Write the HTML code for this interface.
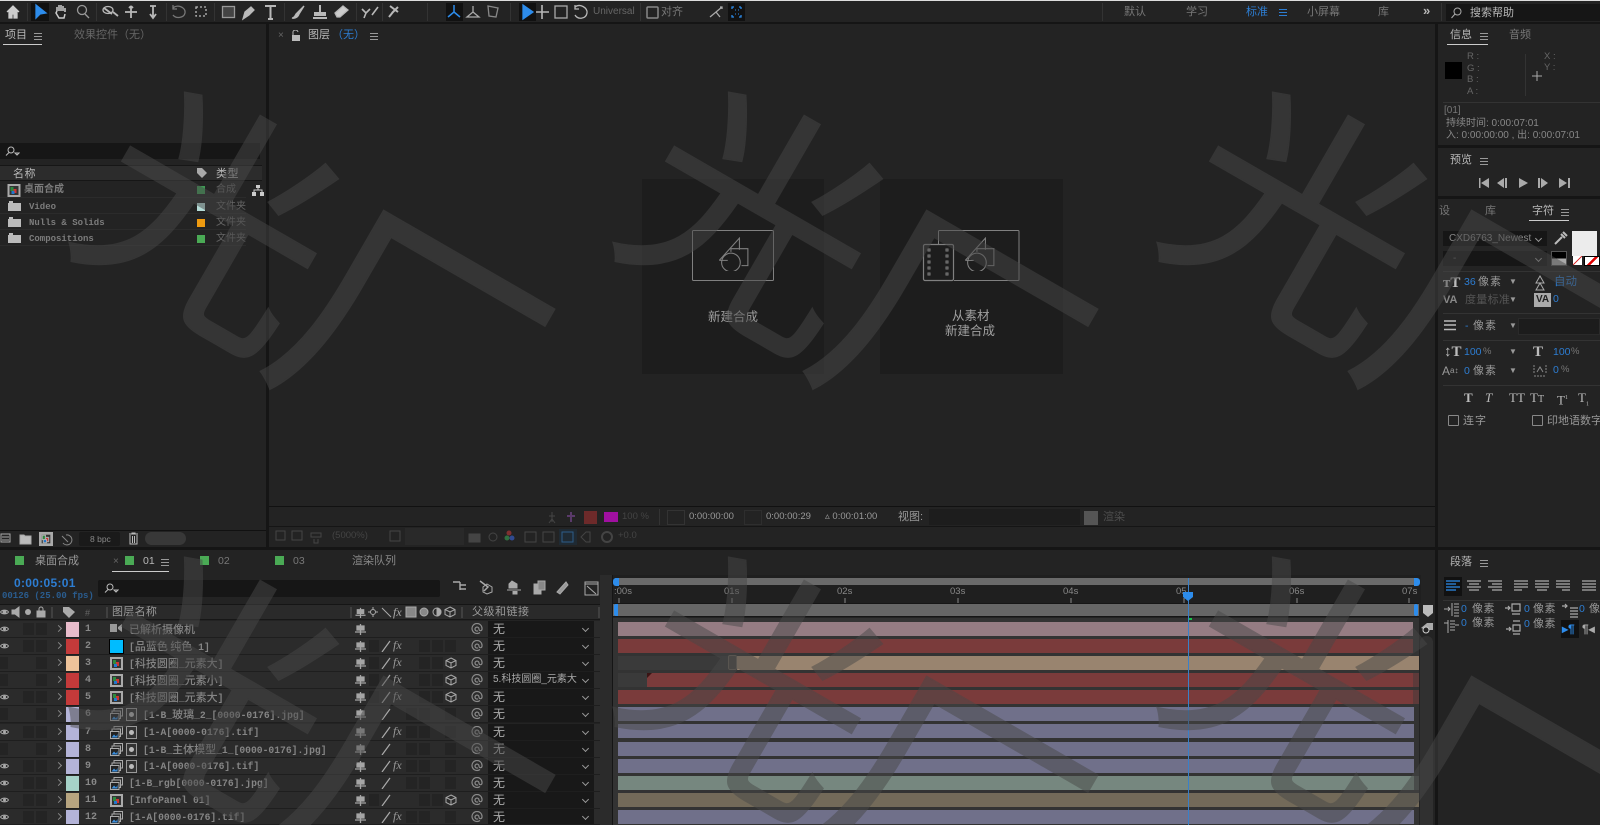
<!DOCTYPE html>
<html><head><meta charset="utf-8"><style>
*{box-sizing:border-box}
html,body{margin:0;padding:0;width:1600px;height:825px;overflow:hidden;background:#232323}
body{position:relative;font-family:"Liberation Sans","Noto Sans CJK SC",sans-serif;font-size:11px;color:#999;filter:blur(.35px)}
.a,body>span,body>i,body>svg,body>div{position:absolute;white-space:nowrap}
i{display:block;font-style:normal}
.t{line-height:14px;height:14px;transform:translateY(-7px)}
.d{color:#666}.b{color:#2d7dd2}.w{color:#b8b8b8}
.l{background:#161616}
.m{width:8px;height:7px;border-top:1px solid #999;border-bottom:1px solid #999;background:linear-gradient(#999,#999) 0 2px/100% 1px no-repeat;transform:translateY(-3px)}
.r{left:0;top:0;width:600px;height:17px;border-bottom:1px solid #1e1e1e;background:#2b2b2b;overflow:hidden}
.r>*{position:absolute}
.sb,.lb,.x0,.x1,.x2,.x3,.x4,.x5{top:2px;width:11px;height:12px;background:#242424}
.sb{left:23px}.lb{left:36px}.x0{left:369px;width:10px}.x1{left:406px}.x2{left:419px}.x3{left:432px}.x4{left:445px}.x5{left:0;width:8px}
.ch{left:56px;top:5px;width:5px;height:5px;border-top:1px solid #888;border-right:1px solid #888;transform:rotate(45deg)}
.sw{left:66px;top:1px;width:13px;height:15px}
.n{left:85px;top:1px;line-height:15px;font-size:10px;color:#888;font-family:"Liberation Mono",monospace;font-weight:bold}
.nm{top:1px;line-height:15px;font-size:9.7px;color:#858585;font-family:"Liberation Mono","Noto Sans CJK SC",monospace;font-weight:bold;left:129px}
.nm.k{left:143px}
.nm em{font-style:normal;font-size:11px;font-family:"Noto Sans CJK SC",sans-serif;font-weight:500}
.dd{left:488px;top:0;width:106px;height:16px;background:#181818;color:#aaa;font-size:12px;line-height:16px;padding-left:5px}
.dd:after,.cv:after{content:"";position:absolute;right:6px;top:5px;width:4px;height:4px;border-right:1px solid #999;border-bottom:1px solid #999;transform:rotate(45deg)}
.sy{left:355px;top:2px}.sl{left:381px;top:2px}.fx{left:393px;top:0;font:italic 12px/15px "Liberation Serif",serif;color:#999}
.cb{left:445px;top:2px}.sp{left:471px;top:2px}.ey{left:0;top:4px}
.bar{height:14px}
.mono{font-family:"Liberation Mono","Noto Sans CJK SC",monospace;font-size:9px;color:#7c7c7c;font-weight:bold}
</style></head><body>
<svg width="0" height="0" style="position:absolute"><defs>
<symbol id="eye" viewBox="0 0 9 8"><path d="M.5 4C2 1.5 7 1.5 8.500 4 7 6.500 2 6.500.5 4Z" fill="none" stroke="#aaa"/><circle cx="4.500" cy="4" r="1.500" fill="#aaa"/></symbol>
<symbol id="shy" viewBox="0 0 11 12"><path d="M2 3H9V7H2ZM0 9H11M5.500 1V12" fill="#a5a5a5" stroke="#a5a5a5" stroke-width="1.300"/></symbol>
<symbol id="sla" viewBox="0 0 10 12"><path d="M1 12 9 1" stroke="#aaa" stroke-width="1.200"/></symbol>
<symbol id="cub" viewBox="0 0 12 12"><path d="M6 1 11 3.500V8.500L6 11 1 8.500V3.500ZM1 3.500 6 6 11 3.500M6 6V11" fill="none" stroke="#aaa"/></symbol>
<symbol id="spi" viewBox="0 0 12 12"><path d="M9 9.500A5 5 0 1 1 11 6C11 8 8 8.500 8 6A2 2 0 1 0 7 7.800" fill="none" stroke="#8a8a8a" stroke-width="1.200"/></symbol>
<symbol id="cmp" viewBox="0 0 13 13"><rect width="13" height="13" fill="#aaa"/><rect x="2" y="2" width="9" height="9" fill="#333"/><rect x="3" y="3" width="3" height="4" fill="#2d8a3e"/><rect x="6" y="5" width="3" height="4" fill="#c33"/><rect x="4" y="7" width="3" height="3" fill="#27c"/></symbol>
<symbol id="ftg" viewBox="0 0 13 13"><path d="M4 3V.5H12.500V8H10M2 5.500V3H10.500V10.500H9" fill="none" stroke="#aaa"/><rect x=".5" y="5.500" width="8.500" height="7" fill="#222" stroke="#aaa"/><path d="M1.500 11.500 4 8.500 6 10.500 7.500 8V11.500Z" fill="#3a90e0"/></symbol>
<symbol id="bx" viewBox="0 0 11 13"><rect x=".5" y=".5" width="10" height="12" fill="#333" stroke="#999"/><circle cx="5.500" cy="6.500" r="2.500" fill="#bbb"/></symbol>
<symbol id="fol" viewBox="0 0 13 10"><path d="M0 2H1V0H5V2H13V10H0Z" fill="#bbb"/></symbol>
<symbol id="shp" viewBox="0 0 34 32"><path d="M5 22 24 1V12M5 22H13" fill="none" stroke="#808080" stroke-width="1"/><path d="M16 14V11H32V27H26" fill="none" stroke="#808080"/><circle cx="16" cy="24" r="8.800" fill="none" stroke="#808080" stroke-width="1"/></symbol>
</defs></svg>

<!-- frame -->
<div style="left:0;top:0;width:1600px;height:1px;background:#ddd"></div>
<div style="left:0;top:22px;width:1600px;height:2px;background:#151515"></div>
<div style="left:266px;top:24px;width:3px;height:524px;background:#151515"></div>
<div style="left:1435px;top:24px;width:3px;height:801px;background:#151515"></div>
<div style="left:0;top:547px;width:1600px;height:3px;background:#151515"></div>
<div style="left:1438px;top:145px;width:162px;height:3px;background:#151515"></div>
<div style="left:1438px;top:196px;width:162px;height:3px;background:#151515"></div>

<!-- toolbar -->
<div style="left:31px;top:3px;width:18px;height:18px;background:#111"></div>
<div style="left:446px;top:3px;width:17px;height:18px;background:#111"></div>
<div style="left:519px;top:3px;width:17px;height:18px;background:#111"></div>
<div style="left:728px;top:3px;width:17px;height:18px;background:#111"></div>
<svg style="left:0;top:0" width="760" height="23" fill="none" stroke="#b8b8b8" stroke-width="1.300">
<path d="M7 12 13 6 19 12M9 12V18H12V14H14V18H17V12" fill="#ccc" stroke="#ccc"/>
<path d="M36 5V18L40 14 46 13Z" fill="#2d8ceb" stroke="#2d8ceb"/>
<path d="M57 11V7M59 11V5M61 11V5M63 11V6M65 12V8M57 11 56 13 59 18H64L65 14" stroke="#ccc" stroke-width="1.500"/>
<circle cx="82" cy="10" r="4.500" stroke="#999"/><path d="M85 14 89 18" stroke="#999"/>
<ellipse cx="108" cy="10" rx="5" ry="3.500"/><path d="M113 12 118 16M104 8 112 14" stroke-width="1.800"/>
<path d="M125 12H137M131 6V18M131 6 129 8M131 6 133 8" stroke-width="1.800"/>
<path d="M153 6V17M150 14 153 18 156 14M150 6H156" stroke-width="1.800"/>
<path d="M173 8C177 4 186 7 185 13 184 18 176 19 173 15M173 5V9H177" stroke="#777"/>
<rect x="196" y="7" width="10" height="9" stroke-dasharray="2 2"/>
<rect x="222.500" y="6.500" width="12" height="11" stroke="#999" fill="#444"/>
<path d="M243 19 245 12 251 7 254 10 249 15Z" fill="#bbb"/>
<path d="M265 6H276M270.500 6V19M268 19H273" stroke-width="2"/>
<path d="M292 18C294 18 295 16 296 14L304 6 299 14C298 17 295 19 292 18Z" fill="#bbb"/>
<path d="M320 5V12M315 13H325V15H315ZM313 18H327" stroke-width="2"/>
<path d="M335 13 343 6 348 10 340 17H337Z" fill="#ccc"/>
<path d="M362 9 366 13 364 18M366 13 370 9M372 15 378 7" stroke-width="1.600"/>
<path d="M390 6 398 12M392 13 398 7M393 12 389 17" stroke-width="2"/>
<path d="M454 5V12L448 17M454 12 460 17" stroke="#2d8ceb" stroke-width="1.500"/>
<path d="M473 6V12L467 17H479L473 12" stroke="#aaa"/>
<path d="M488 6 498 8 496 17 489 16Z" stroke="#888"/>
<path d="M523 5V19L533 12Z" fill="#2d8ceb" stroke="#2d8ceb"/>
<path d="M536 12H549M542 5V19" stroke-width="1.600"/>
<rect x="555" y="6" width="12" height="12" stroke="#aaa"/>
<path d="M575 7C580 3 588 8 587 13 586 19 578 20 575 15M575 5V9H579"/>
<rect x="647" y="7" width="11" height="11" rx="1" stroke="#888" stroke-width="1.500"/>
<path d="M710 17 716 12 720 17M716 12 722 7M720 7H722V9" stroke="#aaa"/>
<path d="M732 9V7H734M741 7V9M739 7H741M732 15V17H734M741 15V17H739M735 10H735.800M738 10H738.800M735 14H735.800M738 14H738.800" stroke="#2d8ceb"/>
<path d="M27.500 3V21M96.500 3V21M166.500 3V21M214.500 3V21M284.500 3V21M356.500 3V21M382.500 3V21M427.500 3V21M510.500 3V21M640.500 3V21" stroke="#333" stroke-width="1"/>
</svg>
<div style="left:1102px;top:3px;width:1px;height:18px;background:#333"></div>
<div style="left:1441px;top:3px;width:1px;height:18px;background:#333"></div>
<span class="t d" style="left:593px;top:12px;font-size:10px">Universal</span>
<span class="t d" style="left:661px;top:12px;font-size:11px;color:#777">对齐</span>
<span class="t" style="left:1124px;top:12px;color:#777">默认</span>
<span class="t" style="left:1186px;top:12px;color:#777">学习</span>
<span class="t b" style="left:1246px;top:12px">标准</span>
<i class="m" style="left:1279px;top:12px;border-color:#2d7dd2;background-image:linear-gradient(#2d7dd2,#2d7dd2)"></i>
<span class="t" style="left:1307px;top:12px;color:#777">小屏幕</span>
<span class="t" style="left:1378px;top:12px;color:#777">库</span>
<span class="t w" style="left:1423px;top:11px;font-weight:bold;font-size:13px">»</span>
<div class="l" style="left:1446px;top:4px;width:154px;height:17px"></div>
<svg style="left:1450px;top:6px" width="13" height="13" fill="none" stroke="#aaa"><circle cx="7.500" cy="5.500" r="3.500"/><path d="M5 8 1.500 12"/></svg>
<span class="t w" style="left:1470px;top:13px">搜索帮助</span>

<!-- project panel -->
<span class="t w" style="left:5px;top:35px">项目</span><i class="m" style="left:34px;top:36px"></i>
<div style="left:3px;top:44px;width:39px;height:1px;background:#ccc"></div>
<span class="t d" style="left:74px;top:35px">效果控件（无）</span>
<div class="l" style="left:0;top:143px;width:260px;height:16px"></div>
<svg style="left:4px;top:145px" width="16" height="12" fill="none" stroke="#bbb"><circle cx="7" cy="5" r="3"/><path d="M5 7.500 2 10.500M11 8H15L13 10Z"/></svg>
<div style="left:0;top:165px;width:262px;height:16px;background:#2c2c2c;border-top:1px solid #161616;border-bottom:1px solid #161616"></div>
<span class="t w" style="left:13px;top:174px;letter-spacing:.5px">名称</span>
<span class="t w" style="left:216px;top:174px;letter-spacing:.5px">类型</span>
<svg style="left:196px;top:167px" width="12" height="12"><path d="M1 1H6L11 6 6 11 1 6Z" fill="#aaa"/></svg>
<svg style="left:7px;top:184px" width="14" height="13"><use href="#cmp"/></svg>
<span class="t mono" style="left:24px;top:190px"><span style="font-size:10px">桌面合成</span></span>
<i style="left:197px;top:186px;width:8px;height:8px;background:#3f9a55"></i>
<span class="t d" style="left:216px;top:190px;font-size:10px">合成</span>
<svg style="left:252px;top:185px" width="12" height="11" fill="#ccc"><rect x="4" y="0" width="4" height="3"/><rect x="0" y="7" width="4" height="4"/><rect x="8" y="7" width="4" height="4"/><path d="M2 7V5H10V7M6 3V5" stroke="#ccc" fill="none"/></svg>
<svg style="left:8px;top:201px" width="13" height="10"><use href="#fol"/></svg>
<span class="t mono" style="left:29px;top:207px">Video</span>
<i style="left:197px;top:203px;width:8px;height:8px;background:#b5dcd8"></i>
<span class="t d" style="left:216px;top:207px;font-size:10px">文件夹</span>
<svg style="left:8px;top:217px" width="13" height="10"><use href="#fol"/></svg>
<span class="t mono" style="left:29px;top:223px">Nulls &amp; Solids</span>
<i style="left:197px;top:219px;width:8px;height:8px;background:#ee9a10"></i>
<span class="t d" style="left:216px;top:223px;font-size:10px">文件夹</span>
<svg style="left:8px;top:233px" width="13" height="10"><use href="#fol"/></svg>
<span class="t mono" style="left:29px;top:239px">Compositions</span>
<i style="left:197px;top:235px;width:8px;height:8px;background:#4aaa55"></i>
<span class="t d" style="left:216px;top:239px;font-size:10px">文件夹</span>
<div style="left:0;top:197px;width:246px;height:1px;background:#2b2b2b"></div>
<div style="left:0;top:213px;width:246px;height:1px;background:#2b2b2b"></div>
<div style="left:0;top:229px;width:246px;height:1px;background:#2b2b2b"></div>
<div style="left:0;top:245px;width:246px;height:1px;background:#2b2b2b"></div>
<div style="left:0;top:530px;width:266px;height:1px;background:#111"></div>
<svg style="left:0;top:532px" width="120" height="14" fill="none" stroke="#aaa"><rect x="1" y="2" width="9" height="8"/><path d="M2 5H9M2 8H9"/><path d="M20 3H24L25 4H31V12H20Z" fill="#bbb"/><use href="#cmp" x="39" y="0" width="14" height="14"/><path d="M62 4 68 10M66 3A5 5 0 1 1 63 11" stroke="#888"/></svg>
<div style="left:79px;top:532px;width:41px;height:14px;background:#1a1a1a;border-radius:2px"></div>
<span class="t" style="left:90px;top:539px;font-size:8.500px;color:#888">8 bpc</span>
<svg style="left:128px;top:532px" width="11" height="13" fill="none" stroke="#bbb"><path d="M1 2H10M4 2V1H7V2M2 3V12H9V3M4.500 4V11M6.500 4V11"/></svg>
<div style="left:145px;top:532px;width:41px;height:13px;background:#383838;border-radius:7px"></div>

<!-- viewer -->
<span class="t d" style="left:278px;top:36px;font-size:10px">×</span>
<svg style="left:291px;top:30px" width="10" height="11"><path d="M2 5V3A2.500 2.500 0 0 1 7 2" fill="none" stroke="#bbb"/><rect x="1" y="5" width="8" height="6" fill="#bbb"/></svg>
<span class="t w" style="left:308px;top:35px">图层</span>
<span class="t b" style="left:332px;top:35px">（无）</span>
<i class="m" style="left:370px;top:36px"></i>
<div style="left:642px;top:179px;width:182px;height:195px;background:#1d1d1d"></div>
<div style="left:880px;top:179px;width:183px;height:195px;background:#1d1d1d"></div>
<svg style="left:680px;top:225px" width="400" height="60" fill="none" stroke="#808080">
<rect x="12.500" y="5.500" width="81" height="50" rx="1"/>
<use href="#shp" x="34" y="12" width="36" height="34"/>
<path d="M258.500 19V6.500A1 1 0 0 1 259.500 5.500H338A1 1 0 0 1 339 6.500V54.500A1 1 0 0 1 338 55.500H274"/>
<use href="#shp" x="280" y="12" width="36" height="34"/>
<rect x="243.500" y="19.500" width="30" height="36" rx="1.500" stroke-width="1.200"/>
<path d="M248 24h2v2h-2zM248 30h2v2h-2zM248 36h2v2h-2zM248 42h2v2h-2zM248 48h2v2h-2zM266 24h2v2h-2zM266 30h2v2h-2zM266 36h2v2h-2zM266 42h2v2h-2zM266 48h2v2h-2z"/>
</svg>
<span class="t" style="left:708px;top:317px;font-size:12.500px;color:#a0a0a0">新建合成</span>
<span class="t" style="left:952px;top:316px;font-size:12.500px;color:#a0a0a0">从素材</span>
<span class="t" style="left:945px;top:331px;font-size:12.500px;color:#a0a0a0">新建合成</span>

<div style="left:269px;top:506px;width:1166px;height:1px;background:#111"></div>
<div style="left:269px;top:526px;width:1166px;height:1px;background:#151515"></div>
<svg style="left:540px;top:509px" width="90" height="16"><path d="M12 3V13M9 7H15M9 14 12 10 15 14" stroke="#444" fill="none"/><path d="M31 3V13M27 7H35" stroke="#5a3a6a" stroke-width="2"/><rect x="44" y="2" width="13" height="13" fill="#6d2a2a"/></svg>
<i style="left:604px;top:512px;width:14px;height:10px;background:#a010a0"></i>
<span class="t" style="left:622px;top:517px;font-size:9.500px;color:#444">100 %</span>
<div style="left:659px;top:509px;width:1px;height:16px;background:#333"></div>
<div style="left:667px;top:510px;width:18px;height:15px;border:1px solid #333"></div>
<div style="left:744px;top:510px;width:18px;height:15px;border:1px solid #2e2e2e"></div>
<span class="t" style="left:689px;top:517px;font-size:9.500px;color:#999">0:00:00:00</span>
<span class="t" style="left:766px;top:517px;font-size:9.500px;color:#999">0:00:00:29</span>
<span class="t" style="left:825px;top:517px;font-size:9.500px;color:#999">▵ 0:00:01:00</span>
<span class="t" style="left:898px;top:517px;font-size:11px;color:#999">视图:</span>
<div style="left:929px;top:509px;width:151px;height:16px;background:#1d1d1d"></div>
<i style="left:1084px;top:511px;width:14px;height:14px;background:#555"></i>
<span class="t d" style="left:1103px;top:517px;font-size:11px;color:#4d4d4d">渲染</span>
<svg style="left:270px;top:528px" width="350" height="18" fill="none" stroke="#444"><rect x="6" y="3" width="9" height="9"/><rect x="22" y="3" width="10" height="9"/><path d="M41 5H51V9H41ZM44 11V15H48V11"/><rect x="120" y="3" width="10" height="10"/><rect x="199" y="6" width="11" height="8" fill="#444"/><circle cx="223" cy="9" r="4"/><circle cx="239" cy="5" r="2.500" fill="#803030" stroke="none"/><circle cx="237" cy="10" r="2.500" fill="#307040" stroke="none"/><circle cx="242" cy="10" r="2.500" fill="#304a90" stroke="none"/><rect x="255" y="4" width="11" height="10"/><rect x="273" y="4" width="11" height="10"/><rect x="289" y="1" width="18" height="16" fill="#1f2a33" stroke="none"/><rect x="292" y="4" width="11" height="10" stroke="#2c5c88"/><path d="M311 9 316 4H320V14H316Z"/><circle cx="337" cy="9" r="5" stroke-width="2"/></svg>
<span class="t" style="left:332px;top:536px;font-size:9.500px;color:#444">(5000%)</span>
<div style="left:405px;top:528px;width:59px;height:17px;background:#292929"></div>
<span class="t" style="left:618px;top:536px;font-size:9.500px;color:#444">+0.0</span>

<!-- info -->
<span class="t w" style="left:1450px;top:35px">信息</span><i class="m" style="left:1480px;top:36px"></i>
<div style="left:1447px;top:44px;width:41px;height:1px;background:#ccc"></div>
<span class="t" style="left:1509px;top:35px;color:#777">音频</span>
<i style="left:1445px;top:62px;width:17px;height:17px;background:#000"></i>
<span class="t" style="left:1467px;top:57px;font-size:9.500px;color:#666">R :</span>
<span class="t" style="left:1467px;top:69px;font-size:9.500px;color:#666">G :</span>
<span class="t" style="left:1467px;top:80px;font-size:9.500px;color:#666">B :</span>
<span class="t" style="left:1467px;top:92px;font-size:9.500px;color:#666">A :</span>
<div style="left:1525px;top:54px;width:1px;height:42px;background:#333"></div>
<span class="t" style="left:1544px;top:57px;font-size:9.500px;color:#666">X :</span>
<span class="t" style="left:1544px;top:68px;font-size:9.500px;color:#666">Y :</span>
<svg style="left:1532px;top:71px" width="10" height="10"><path d="M5 0V10M0 5H10" stroke="#aaa"/></svg>
<div style="left:1443px;top:102px;width:157px;height:1px;background:#333"></div>
<span class="t" style="left:1444px;top:111px;font-size:10px;color:#777">[01]</span>
<span class="t" style="left:1446px;top:124px;font-size:10px;color:#888">持续时间: 0:00:07:01</span>
<span class="t" style="left:1446px;top:136px;font-size:10px;color:#888">入: 0:00:00:00 , 出: 0:00:07:01</span>

<!-- preview -->
<span class="t w" style="left:1450px;top:160px">预览</span><i class="m" style="left:1480px;top:161px"></i>
<svg style="left:1478px;top:177px" width="95" height="12" fill="#aaa"><path d="M1 1H2.500V11H1ZM3 6 11 1V11ZM19 6 26 1V11ZM27 1H29V11H27ZM41 1 50 6 41 11ZM60 1H62V11H60ZM63 1 70 6 63 11ZM81 1 89 6 81 11ZM90 1H92V11H90Z"/></svg>

<!-- character -->
<span class="t" style="left:1439px;top:211px;color:#777">设</span>
<span class="t" style="left:1485px;top:211px;color:#777">库</span>
<span class="t w" style="left:1532px;top:211px">字符</span><i class="m" style="left:1561px;top:212px"></i>
<div style="left:1529px;top:220px;width:40px;height:1px;background:#ccc"></div>
<div class="l cv" style="left:1443px;top:231px;width:104px;height:15px;color:#888;font-size:10px;line-height:15px;padding-left:6px">CXD6763_Newest</div>
<div class="l cv" style="left:1443px;top:251px;width:104px;height:15px;color:#666;font-size:10px;line-height:15px;padding-left:10px">-</div>
<svg style="left:1552px;top:231px" width="16" height="16"><path d="M3 13 10 6M9 3 13 7M11 1 15 5" stroke="#bbb" stroke-width="2" fill="none"/></svg>
<div style="left:1551px;top:251px;width:16px;height:15px;background:linear-gradient(#000 50%,#aaa 50%);border:1px solid #555"></div>
<i style="left:1572px;top:231px;width:25px;height:25px;background:#ececec"></i>
<i style="left:1573px;top:256px;width:9px;height:9px;background:linear-gradient(135deg,#fff 45%,#d33 45%,#d33 55%,#fff 55%)"></i>
<i style="left:1584px;top:256px;width:16px;height:10px;background:linear-gradient(135deg,#fff 45%,#d00 45%,#d00 60%,#fff 60%);border:1px solid #000"></i>
<div style="left:1443px;top:271px;width:157px;height:1px;background:#333"></div>
<div style="left:1443px;top:313px;width:157px;height:1px;background:#333"></div>
<div style="left:1443px;top:340px;width:157px;height:1px;background:#333"></div>
<div style="left:1443px;top:385px;width:157px;height:1px;background:#333"></div>
<span class="a t" style="left:1443px;top:283px;font:bold 15px/14px 'Liberation Serif',serif;color:#bbb">ᴛT</span>
<span class="t b" style="left:1464px;top:282px;font-size:10.500px">36</span><span class="t" style="left:1478px;top:282px;letter-spacing:1px">像素</span><span class="t" style="left:1509px;top:282px;font-size:8px">▼</span>
<svg style="left:1532px;top:275px" width="16" height="16" fill="none" stroke="#aaa"><path d="M8 1 4 8H12ZM8 8 4 15H12Z"/></svg>
<span class="t b" style="left:1554px;top:282px;font-size:11.500px">自动</span>
<span class="t" style="left:1443px;top:300px;font-size:11px;color:#888;font-weight:bold">VA</span>
<span class="t" style="left:1465px;top:300px;color:#555;letter-spacing:.3px">度量标准</span><span class="t" style="left:1509px;top:300px;font-size:8px">▼</span>
<span class="t" style="left:1534px;top:300px;background:#aaa;color:#222;font-size:10px;font-weight:bold;padding:0 2px">VA</span>
<span class="t b" style="left:1553px;top:299px;font-size:10.500px">0</span>
<svg style="left:1444px;top:319px" width="13" height="13"><path d="M0 2H12M0 6H12M0 10.500H12" stroke="#bbb" stroke-width="1.500"/></svg>
<span class="t b" style="left:1465px;top:326px;font-size:10.500px">-</span><span class="t" style="left:1473px;top:326px;letter-spacing:1px">像素</span><span class="t" style="left:1509px;top:326px;font-size:8px">▼</span>
<div style="left:1518px;top:318px;width:82px;height:17px;background:#1c1c1c;border:1px solid #2a2a2a"></div>
<span class="t" style="left:1444px;top:352px;font:bold 15px/14px 'Liberation Serif',serif;color:#bbb">↕T</span>
<span class="t b" style="left:1464px;top:352px;font-size:10.500px">100</span><span class="t" style="left:1483px;top:352px;font-size:9.500px;color:#777">%</span><span class="t" style="left:1509px;top:352px;font-size:8px">▼</span>
<span class="t" style="left:1533px;top:352px;font:bold 15px/14px 'Liberation Serif',serif;color:#bbb">T</span>
<span class="t b" style="left:1553px;top:352px;font-size:10.500px">100</span><span class="t" style="left:1571px;top:352px;font-size:9.500px;color:#777">%</span>
<span class="t" style="left:1442px;top:371px;font-size:12px;color:#999">A</span><span class="t" style="left:1450px;top:371px;font-size:8px;color:#999">a↕</span>
<span class="t b" style="left:1464px;top:371px;font-size:10.500px">0</span><span class="t" style="left:1473px;top:371px;letter-spacing:1px">像素</span><span class="t" style="left:1509px;top:371px;font-size:8px">▼</span>
<svg style="left:1533px;top:364px" width="14" height="14" fill="none" stroke="#888"><path d="M1 1V9M13 1V9M1 12H13" stroke-dasharray="2 1"/><path d="M4 8 7 3 10 8"/></svg>
<span class="t b" style="left:1553px;top:370px;font-size:10.500px">0</span><span class="t" style="left:1561px;top:370px;font-size:9.500px;color:#777">%</span>
<span class="t" style="left:1464px;top:398px;font:bold 13px/14px 'Liberation Serif',serif;color:#bbb">T</span>
<span class="t" style="left:1485px;top:398px;font:italic 13px/14px 'Liberation Serif',serif;color:#bbb">T</span>
<span class="t" style="left:1509px;top:398px;font:13px/14px 'Liberation Serif',serif;color:#bbb">TT</span>
<span class="t" style="left:1530px;top:398px;font:13px/14px 'Liberation Serif',serif;color:#bbb">T<span style="font-size:10px">T</span></span>
<span class="t" style="left:1557px;top:398px;font:13px/14px 'Liberation Serif',serif;color:#bbb">T<sup style="font-size:6px">1</sup></span>
<span class="t" style="left:1578px;top:398px;font:13px/14px 'Liberation Serif',serif;color:#bbb">T<sub style="font-size:6px">1</sub></span>
<i style="left:1448px;top:415px;width:11px;height:11px;border:1.500px solid #888;border-radius:1px"></i>
<span class="t" style="left:1463px;top:421px;letter-spacing:1px">连字</span>
<i style="left:1532px;top:415px;width:11px;height:11px;border:1.500px solid #888;border-radius:1px"></i>
<span class="t" style="left:1547px;top:421px">印地语数字</span>

<!-- paragraph -->
<span class="t w" style="left:1450px;top:562px">段落</span><i class="m" style="left:1480px;top:563px"></i>
<div style="left:1444px;top:577px;width:18px;height:19px;background:#111"></div>
<svg style="left:1444px;top:578px" width="156" height="16" stroke="#aaa" stroke-width="1.300" fill="none">
<path d="M2 3H16M2 6H12M2 9H16M2 12H12" stroke="#2d8ceb"/>
<path d="M23 3H37M25 6H35M23 9H37M25 12H35M44 3H58M48 6H58M44 9H58M48 12H58M70 3H84M70 6H84M70 9H84M70 12H78M91 3H105M91 6H105M91 9H105M93 12H103M112 3H126M112 6H126M112 9H126M118 12H126M138 3H152M138 6H152M138 9H152M138 12H152"/>
</svg>
<div style="left:1443px;top:600px;width:157px;height:1px;background:#333"></div>
<svg style="left:1444px;top:602px" width="156" height="34" stroke="#aaa" fill="none">
<path d="M0 7H6M4 5 6 7 4 9M8 1V14M10 2H15M10 5H15M10 8H15M10 11H15M10 14H15"/>
<path d="M0 22H4M4 19V32M6 20H11M6 23H11M6 26H11M6 29H11M11 24H15" transform="translate(0,-1)"/>
<path d="M61 6H66M64 4 66 6 64 8M68 2H76V9H68ZM68 12H76" stroke-width="1.200"/>
<path d="M62 27H67M65 25 67 27 65 29M69 19H76M69 23H76V29H69ZM69 32H76" stroke-width="1.200"/>
<path d="M118 4H123M121 2 123 4 121 6M126 6H134M126 9H134M126 12H134M126 15H134" stroke-width="1.200"/>
</svg>
<span class="t b" style="left:1461px;top:609px;font-size:10.500px">0</span><span class="t" style="left:1472px;top:609px;letter-spacing:.5px">像素</span>
<span class="t b" style="left:1524px;top:609px;font-size:10.500px">0</span><span class="t" style="left:1533px;top:609px;letter-spacing:.5px">像素</span>
<span class="t b" style="left:1579px;top:609px;font-size:10.500px">0</span><span class="t" style="left:1589px;top:609px">像</span>
<span class="t b" style="left:1461px;top:623px;font-size:10.500px">0</span><span class="t" style="left:1472px;top:623px;letter-spacing:.5px">像素</span>
<span class="t b" style="left:1524px;top:624px;font-size:10.500px">0</span><span class="t" style="left:1533px;top:624px;letter-spacing:.5px">像素</span>
<div style="left:1561px;top:620px;width:18px;height:18px;background:#111"></div>
<span class="t" style="left:1562px;top:629px;font-size:12px;font-weight:bold;color:#2d8ceb">▸¶</span>
<span class="t" style="left:1582px;top:629px;font-size:12px;font-weight:bold;color:#aaa">¶◂</span>

<!-- timeline header -->
<i style="left:15px;top:556px;width:9px;height:9px;background:#4aaa55"></i><span class="t" style="left:35px;top:561px;color:#999">桌面合成</span>
<span class="t d" style="left:113px;top:562px;font-size:10px">×</span>
<i style="left:125px;top:556px;width:9px;height:9px;background:#4aaa55"></i><span class="t w" style="left:143px;top:561px;font-size:10.500px">01</span><i class="m" style="left:161px;top:562px"></i>
<div style="left:112px;top:571px;width:57px;height:1px;background:#ccc"></div>
<i style="left:200px;top:556px;width:9px;height:9px;background:#4aaa55"></i><span class="t" style="left:218px;top:561px;font-size:10.500px;color:#777">02</span>
<i style="left:275px;top:556px;width:9px;height:9px;background:#4aaa55"></i><span class="t" style="left:293px;top:561px;font-size:10.500px;color:#777">03</span>
<span class="t" style="left:352px;top:561px;color:#888">渲染队列</span>
<span class="t" style="left:14px;top:583px;font-size:12px;font-weight:bold;color:#2d7dd2;letter-spacing:.3px">0:00:05:01</span>
<span class="t" style="left:2px;top:596px;font:9px/14px 'Liberation Mono',monospace;color:#2a5c8e;font-weight:bold">00126 (25.00 fps)</span>
<div class="l" style="left:98px;top:580px;width:342px;height:17px;border-radius:2px"></div>
<svg style="left:103px;top:582px" width="16" height="12" fill="none" stroke="#bbb"><circle cx="7" cy="5" r="3"/><path d="M5 7.500 2 10.500M11 8H15L13 10Z"/></svg>
<svg style="left:450px;top:578px" width="150" height="18" fill="none" stroke="#aaa">
<path d="M3 4H10M10 4V12M10 7H16M10 11H16" stroke-width="1.400"/>
<path d="M30 3 38 9 34 13" stroke-width="1.500"/><path d="M37 6 42 9V14L37 16 33 14V9Z"/>
<path d="M62 3 67 6V10H59V6ZM57 12H71M63 13V16H67V13" fill="#aaa"/>
<rect x="84" y="6" width="7" height="10" fill="#aaa"/><rect x="88" y="3" width="7" height="9" fill="#888"/>
<path d="M107 14 116 4 118 7 110 16Z" fill="#999"/>
<rect x="135" y="4" width="13" height="13"/><path d="M135 6H148M137 8 146 16"/>
</svg>
<div style="left:0;top:604px;width:612px;height:1px;background:#151515"></div>
<div style="left:0;top:605px;width:600px;height:15px;background:#2a2a2a;border-bottom:1px solid #171717"></div>
<svg style="left:0;top:606px" width="600" height="13" fill="none" stroke="#aaa">
<use href="#eye" x="0" y="2" width="9" height="8"/>
<path d="M12 4H15L19 1V11L15 8H12Z" fill="#aaa"/><circle cx="28" cy="6" r="3" fill="#aaa" stroke="none"/><rect x="37" y="5" width="8" height="6" fill="#aaa"/><path d="M39 5V3A2 2 0 0 1 43 3V5"/>
<path d="M52 1V12" stroke="#555"/><path d="M63 1H69L75 6 69 12 63 6Z" fill="#aaa" stroke="none"/>
<path d="M107 1V12M351 1V12M462 1V12M599 1V12" stroke="#555"/>
<use href="#shy" x="355" y="1" width="11" height="11"/>
<circle cx="373" cy="6" r="2.500"/><path d="M373 1V3M373 9V11M368 6H370M376 6H378"/>
<path d="M382 2 391 11"/>
<rect x="406" y="1" width="10" height="10" fill="#888"/>
<circle cx="424" cy="6" r="4" fill="#888"/><circle cx="437" cy="6" r="4"/><path d="M437 2V10A4 4 0 0 0 437 2" fill="#aaa"/>
<use href="#cub" x="444" y="0" width="12" height="12"/>
</svg>
<span class="t" style="left:85px;top:613px;font-size:9px;color:#666">#</span>
<span class="t" style="left:112px;top:612px;color:#999;letter-spacing:.3px">图层名称</span>
<span class="t" style="left:393px;top:612px;font:italic 12px/14px 'Liberation Serif',serif;color:#aaa">fx</span>
<span class="t" style="left:472px;top:612px;color:#999;letter-spacing:.5px">父级和链接</span>

<!-- rows -->
<div class="r" style="top:621px"><svg class="ey" width="9" height="8"><use href="#eye"/></svg><i class="sb"></i><i class="lb"></i><i class="ch"></i><i class="sw" style="background:#e8bccb"></i><span class="n">1</span><svg style="left:110px;top:2px" width="13" height="10"><path d="M0 1H7V9H0ZM8 4 12 1V9L8 6Z" fill="#999"/></svg><span class="nm"><em>已解析摄像机</em></span><svg class="sy" width="11" height="12"><use href="#shy"/></svg><svg class="sp" width="12" height="12"><use href="#spi"/></svg><span class="dd cv">无</span></div>
<div class="r" style="top:638px"><svg class="ey" width="9" height="8"><use href="#eye"/></svg><i class="sb"></i><i class="lb"></i><i class="ch"></i><i class="sw" style="background:#c43a3a"></i><span class="n">2</span><i style="left:109px;top:1px;width:15px;height:15px;background:#00bcff;border:1px solid #000"></i><span class="nm">[<em>品蓝色 纯色</em> 1]</span><svg class="sy" width="11" height="12"><use href="#shy"/></svg><i class="x0"></i><svg class="sl" width="10" height="12"><use href="#sla"/></svg><span class="fx">fx</span><i class="x2"></i><i class="x3"></i><i class="x4"></i><svg class="sp" width="12" height="12"><use href="#spi"/></svg><span class="dd cv">无</span></div>
<div class="r" style="top:655px"><i class="x5"></i><i class="lb"></i><i class="ch"></i><i class="sw" style="background:#eec39a"></i><span class="n">3</span><svg style="left:110px;top:2px" width="13" height="13"><use href="#cmp"/></svg><span class="nm">[<em>科技圆圈</em>_<em>元素大</em>]</span><svg class="sy" width="11" height="12"><use href="#shy"/></svg><i class="x0"></i><svg class="sl" width="10" height="12"><use href="#sla"/></svg><span class="fx">fx</span><i class="x2"></i><i class="x3"></i><svg class="cb" width="12" height="12"><use href="#cub"/></svg><svg class="sp" width="12" height="12"><use href="#spi"/></svg><span class="dd cv">无</span></div>
<div class="r" style="top:672px"><i class="x5"></i><i class="lb"></i><i class="ch"></i><i class="sw" style="background:#c43a3a"></i><span class="n">4</span><svg style="left:110px;top:2px" width="13" height="13"><use href="#cmp"/></svg><span class="nm">[<em>科技圆圈</em>_<em>元素小</em>]</span><svg class="sy" width="11" height="12"><use href="#shy"/></svg><i class="x0"></i><svg class="sl" width="10" height="12"><use href="#sla"/></svg><span class="fx">fx</span><i class="x2"></i><i class="x3"></i><svg class="cb" width="12" height="12"><use href="#cub"/></svg><svg class="sp" width="12" height="12"><use href="#spi"/></svg><span class="dd cv" style="font-size:10px">5.科技圆圈_元素大</span></div>
<div class="r" style="top:689px"><svg class="ey" width="9" height="8"><use href="#eye"/></svg><i class="sb"></i><i class="lb"></i><i class="ch"></i><i class="sw" style="background:#c43a3a"></i><span class="n">5</span><svg style="left:110px;top:2px" width="13" height="13"><use href="#cmp"/></svg><span class="nm">[<em>科技圆圈</em>_<em>元素大</em>]</span><svg class="sy" width="11" height="12"><use href="#shy"/></svg><i class="x0"></i><svg class="sl" width="10" height="12"><use href="#sla"/></svg><span class="fx">fx</span><i class="x2"></i><i class="x3"></i><svg class="cb" width="12" height="12"><use href="#cub"/></svg><svg class="sp" width="12" height="12"><use href="#spi"/></svg><span class="dd cv">无</span></div>
<div class="r" style="top:706px"><i class="x5"></i><i class="lb"></i><i class="ch"></i><i class="sw" style="background:#b4b4d8"></i><span class="n">6</span><svg style="left:110px;top:2px" width="13" height="13"><use href="#ftg"/></svg><svg style="left:126px;top:2px" width="11" height="13"><use href="#bx"/></svg><span class="nm k">[1-B_<em>玻璃</em>_2_[0000-0176].jpg]</span><svg class="sy" width="11" height="12"><use href="#shy"/></svg><svg class="sl" width="10" height="12"><use href="#sla"/></svg><i class="x1"></i><i class="x2"></i><i class="x4"></i><svg class="sp" width="12" height="12"><use href="#spi"/></svg><span class="dd cv">无</span></div>
<div class="r" style="top:724px"><svg class="ey" width="9" height="8"><use href="#eye"/></svg><i class="sb"></i><i class="lb"></i><i class="ch"></i><i class="sw" style="background:#b4b4d8"></i><span class="n">7</span><svg style="left:110px;top:2px" width="13" height="13"><use href="#ftg"/></svg><svg style="left:126px;top:2px" width="11" height="13"><use href="#bx"/></svg><span class="nm k">[1-A[0000-0176].tif]</span><svg class="sy" width="11" height="12"><use href="#shy"/></svg><svg class="sl" width="10" height="12"><use href="#sla"/></svg><span class="fx">fx</span><i class="x1"></i><i class="x2"></i><i class="x4"></i><svg class="sp" width="12" height="12"><use href="#spi"/></svg><span class="dd cv">无</span></div>
<div class="r" style="top:741px"><i class="x5"></i><i class="lb"></i><i class="ch"></i><i class="sw" style="background:#b4b4d8"></i><span class="n">8</span><svg style="left:110px;top:2px" width="13" height="13"><use href="#ftg"/></svg><svg style="left:126px;top:2px" width="11" height="13"><use href="#bx"/></svg><span class="nm k">[1-B_<em>主体模型</em>_1_[0000-0176].jpg]</span><svg class="sy" width="11" height="12"><use href="#shy"/></svg><svg class="sl" width="10" height="12"><use href="#sla"/></svg><i class="x1"></i><i class="x2"></i><i class="x4"></i><svg class="sp" width="12" height="12"><use href="#spi"/></svg><span class="dd cv">无</span></div>
<div class="r" style="top:758px"><svg class="ey" width="9" height="8"><use href="#eye"/></svg><i class="sb"></i><i class="lb"></i><i class="ch"></i><i class="sw" style="background:#b4b4d8"></i><span class="n">9</span><svg style="left:110px;top:2px" width="13" height="13"><use href="#ftg"/></svg><svg style="left:126px;top:2px" width="11" height="13"><use href="#bx"/></svg><span class="nm k">[1-A[0000-0176].tif]</span><svg class="sy" width="11" height="12"><use href="#shy"/></svg><svg class="sl" width="10" height="12"><use href="#sla"/></svg><span class="fx">fx</span><i class="x1"></i><i class="x2"></i><i class="x4"></i><svg class="sp" width="12" height="12"><use href="#spi"/></svg><span class="dd cv">无</span></div>
<div class="r" style="top:775px"><svg class="ey" width="9" height="8"><use href="#eye"/></svg><i class="sb"></i><i class="lb"></i><i class="ch"></i><i class="sw" style="background:#a6d2c8"></i><span class="n">10</span><svg style="left:110px;top:2px" width="13" height="13"><use href="#ftg"/></svg><span class="nm">[1-B_rgb[0000-0176].jpg]</span><svg class="sy" width="11" height="12"><use href="#shy"/></svg><svg class="sl" width="10" height="12"><use href="#sla"/></svg><i class="x1"></i><i class="x2"></i><i class="x4"></i><svg class="sp" width="12" height="12"><use href="#spi"/></svg><span class="dd cv">无</span></div>
<div class="r" style="top:792px"><svg class="ey" width="9" height="8"><use href="#eye"/></svg><i class="sb"></i><i class="lb"></i><i class="ch"></i><i class="sw" style="background:#b7a580"></i><span class="n">11</span><svg style="left:110px;top:2px" width="13" height="13"><use href="#cmp"/></svg><span class="nm">[InfoPanel 01]</span><svg class="sy" width="11" height="12"><use href="#shy"/></svg><i class="x0"></i><svg class="sl" width="10" height="12"><use href="#sla"/></svg><i class="x2"></i><i class="x3"></i><svg class="cb" width="12" height="12"><use href="#cub"/></svg><svg class="sp" width="12" height="12"><use href="#spi"/></svg><span class="dd cv">无</span></div>
<div class="r" style="top:809px;height:16px"><svg class="ey" width="9" height="8"><use href="#eye"/></svg><i class="sb"></i><i class="lb"></i><i class="ch"></i><i class="sw" style="background:#b4b4d8"></i><span class="n">12</span><svg style="left:110px;top:2px" width="13" height="13"><use href="#ftg"/></svg><span class="nm">[1-A[0000-0176].tif]</span><svg class="sy" width="11" height="12"><use href="#shy"/></svg><svg class="sl" width="10" height="12"><use href="#sla"/></svg><span class="fx">fx</span><i class="x1"></i><i class="x2"></i><i class="x4"></i><svg class="sp" width="12" height="12"><use href="#spi"/></svg><span class="dd cv">无</span></div>

<!-- timeline tracks -->
<div style="left:600px;top:575px;width:13px;height:250px;background:#2b2b2b;border-right:1px solid #151515"></div>
<div style="left:613px;top:575px;width:808px;height:28px;background:#1f1f1f"></div>
<div style="left:613px;top:618px;width:806px;height:207px;background:#333"></div>
<div style="left:615px;top:578px;width:800px;height:7px;background:#6a6a6a"></div>
<i style="left:613px;top:578px;width:6px;height:8px;background:#2d8ceb;border-radius:3px 0 0 3px"></i>
<i style="left:1414px;top:578px;width:6px;height:8px;background:#2d8ceb;border-radius:0 3px 3px 0"></i>
<span class="t" style="left:614px;top:592px;font-size:9.500px;color:#888">:00s</span>
<span class="t" style="left:724px;top:592px;font-size:9.500px;color:#888">01s</span>
<span class="t" style="left:837px;top:592px;font-size:9.500px;color:#888">02s</span>
<span class="t" style="left:950px;top:592px;font-size:9.500px;color:#888">03s</span>
<span class="t" style="left:1063px;top:592px;font-size:9.500px;color:#888">04s</span>
<span class="t" style="left:1176px;top:592px;font-size:9.500px;color:#888">05</span>
<span class="t" style="left:1289px;top:592px;font-size:9.500px;color:#888">06s</span>
<span class="t" style="left:1402px;top:592px;font-size:9.500px;color:#888">07s</span>
<svg style="left:610px;top:597px" width="810" height="6"><path d="M9 1V6M122 1V6M235 1V6M348 1V6M461 1V6M574 1V6M687 1V6M799 1V6" stroke="#888"/></svg>
<div style="left:613px;top:603px;width:806px;height:14px;background:#666;border-top:1px solid #161616;border-bottom:1px solid #161616"></div>
<i style="left:614px;top:604px;width:4px;height:12px;background:#2d8ceb;border-radius:2px 0 0 2px"></i>
<i style="left:1414px;top:604px;width:4px;height:12px;background:#2d8ceb;border-radius:2px"></i>
<svg style="left:1423px;top:605px" width="10" height="13"><path d="M0 0H10V8L5 12 0 8Z" fill="#bbb"/></svg>
<svg style="left:1420px;top:621px" width="14" height="13"><path d="M1 7 7 2H13V9H7Z" fill="#aaa"/><circle cx="6" cy="9" r="3" fill="#222" stroke="#ccc"/></svg>
<div style="left:1420px;top:636px;width:13px;height:189px;background:#303030;border-radius:6px 6px 0 0"></div>
<i style="left:1188px;top:618px;width:4px;height:2px;background:#19c24a"></i>

<div class="bar" style="left:618px;top:622px;width:795px;background:#957c83"></div>
<div class="bar" style="left:618px;top:639px;width:795px;background:#7a3b3b"></div>
<div class="bar" style="left:618px;top:656px;width:110px;background:#3a3a3a"></div>
<div class="bar" style="left:728px;top:655px;width:9px;height:15px;background:#4a4642;border:1px solid #6a6258;border-radius:2px"></div>
<div class="bar" style="left:737px;top:656px;width:682px;background:#99846f"></div>
<div class="bar" style="left:618px;top:673px;width:29px;background:#3a3a3a"></div>
<div class="bar" style="left:647px;top:673px;width:766px;background:#7a3b3b"></div>
<svg style="left:647px;top:673px" width="5" height="5"><path d="M0 0H5L0 5Z" fill="#3a1414"/></svg>
<div class="bar" style="left:1413px;top:673px;width:6px;background:#5d3a3a"></div>
<div class="bar" style="left:618px;top:690px;width:795px;background:#7a3b3b"></div>
<div class="bar" style="left:1413px;top:690px;width:6px;background:#5d3a3a"></div>
<div class="bar" style="left:618px;top:707px;width:796px;background:#70708a"></div>
<div class="bar" style="left:618px;top:724px;width:796px;background:#70708a"></div>
<div class="bar" style="left:618px;top:742px;width:796px;background:#70708a"></div>
<div class="bar" style="left:618px;top:759px;width:796px;background:#70708a"></div>
<div class="bar" style="left:618px;top:776px;width:796px;background:#76877f"></div>
<div class="bar" style="left:1414px;top:776px;width:5px;background:#4a4f4c"></div>
<div class="bar" style="left:618px;top:793px;width:801px;background:#736a59"></div>
<div class="bar" style="left:618px;top:810px;width:796px;background:#70708a"></div>
<i style="left:1188px;top:578px;width:1px;height:247px;background:#3a80c8"></i>
<svg style="left:1183px;top:592px" width="11" height="10"><path d="M0 0H10V5L5 9 0 5Z" fill="#2d8ceb"/></svg>

<!-- watermark -->
<svg style="left:0;top:0;pointer-events:none" width="1600" height="825" font-family="WenQuanYi Zen Hei, Noto Sans CJK SC, sans-serif" font-size="240" fill="#484848" stroke="#484848" stroke-width="1.500">
<g opacity=".5">
<text transform="translate(64,235) rotate(30)">光</text>
<text transform="translate(256,359) rotate(30)" font-size="250">厂</text>
<text transform="translate(608,235) rotate(30)">光</text>
<text transform="translate(799,359) rotate(30)" font-size="250">厂</text>
<text transform="translate(1152,235) rotate(30)">光</text>
<text transform="translate(1344,359) rotate(30)" font-size="250">厂</text>
<text transform="translate(64,700) rotate(30)">光</text>
<text transform="translate(256,825) rotate(30)" font-size="250">厂</text>
<text transform="translate(608,700) rotate(30)">光</text>
<text transform="translate(799,825) rotate(30)" font-size="250">厂</text>
<text transform="translate(1152,700) rotate(30)">光</text>
<text transform="translate(1344,825) rotate(30)" font-size="250">厂</text>
</g>
</svg>
</body></html>
